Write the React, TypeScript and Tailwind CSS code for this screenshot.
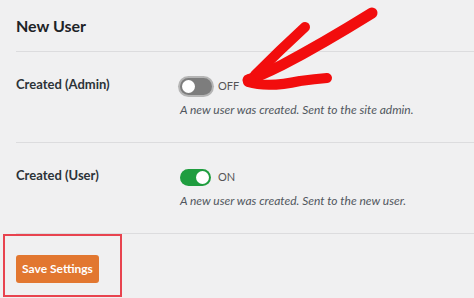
import React from 'react';

interface SettingRowProps {
  label: string;
  enabled: boolean;
  description: string;
}

const Toggle: React.FC<{ enabled: boolean }> = ({ enabled }) =>
  enabled ? (
    <div className="w-[31px] h-[17px] rounded-full bg-[#1f9d3f] flex items-center justify-end pr-[2px]">
      <div className="w-[13px] h-[13px] rounded-full bg-white" />
    </div>
  ) : (
    <div className="w-[36px] h-[21px] rounded-full bg-[#b5b5b5] p-[2px]">
      <div className="w-full h-full rounded-full bg-[#7d7d7d] flex items-center pl-[2px]">
        <div className="w-[13px] h-[13px] rounded-full bg-white" />
      </div>
    </div>
  );

const SettingRow: React.FC<SettingRowProps> = ({ label, enabled, description }) => (
  <div className="flex border-b border-[#dcdcde] pt-6 pb-[23px]">
    <div className="w-[162px] text-[13px] font-bold text-[#2c3338] leading-4">{label}</div>
    <div className="flex flex-col">
      <div className={`flex items-center h-[20px] ${enabled ? 'pl-[2px]' : ''}`}>
        <Toggle enabled={enabled} />
        <span className={`text-[11px] text-[#555] ${enabled ? 'ml-[7px]' : 'ml-[4px]'}`}>{enabled ? 'ON' : 'OFF'}</span>
      </div>
      <p className="mt-[5px] text-[12px] italic text-[#50575e] leading-[18px] pl-[2px]">{description}</p>
    </div>
  </div>
);

const Arrow: React.FC = () => (
  <svg className="absolute left-0 top-0 pointer-events-none" width="474" height="298" viewBox="0 0 474 298">
    <g stroke="#f20d0d" fill="none" strokeLinecap="round" strokeLinejoin="round">
      <path d="M372 13 Q 322 44 282 65 Q 262 75 248 80" strokeWidth="11" />
      <path d="M305 27 Q 280 50 255 75" strokeWidth="10" />
      <path d="M248 82 Q 268 88 300 81 Q 315 79 327 78" strokeWidth="10" />
    </g>
    <circle cx="250" cy="80" r="6" fill="#f20d0d" />
  </svg>
);

export default function App() {
  return (
    <div className="relative w-[474px] h-[298px] overflow-hidden bg-[#f0f0f1]" style={{ fontFamily: 'Lato, "Open Sans", sans-serif' }}>
      <div className="ml-4">
        <div className="h-[52px] border-b border-[#dcdcde] pt-[16px]">
          <h2 className="text-[16px] font-bold text-[#1d2327] leading-5">New User</h2>
        </div>
        <SettingRow label="Created (Admin)" enabled={false} description="A new user was created. Sent to the site admin." />
        <SettingRow label="Created (User)" enabled={true} description="A new user was created. Sent to the new user." />
        <div className="pt-[21px]">
          <button className="w-[83px] h-[28px] rounded-[3px] bg-[#e27730] text-white text-[12px] font-bold">Save Settings</button>
        </div>
      </div>
      <div className="absolute left-[3px] top-[234px] w-[119px] h-[63px] border-2 border-[#e8434f]" />
      <Arrow />
    </div>
  );
}
